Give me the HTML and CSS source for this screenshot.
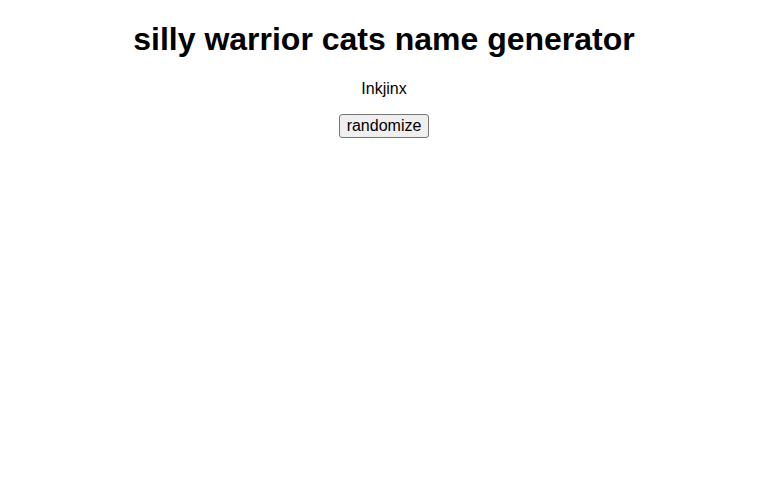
FILE: index.html
```html
<!DOCTYPE html>
<html>
<head>
<meta charset="utf-8">
<link rel="stylesheet" href="styles.css">
</head>
<body class="page">
<h1 class="title">silly warrior cats name generator</h1>
<p class="name">Inkjinx</p>
<button class="btn">randomize</button>
</body>
</html>
```
FILE: styles.css
```css
.page {
  margin: 0;
  font-family: "Liberation Sans", Arial, sans-serif;
  text-align: center;
  color: #000;
  background: #fff;
}
.title {
  font-size: 32px;
  font-weight: bold;
  margin: 21.44px 0;
}
.name {
  font-size: 16px;
  margin: 16px 0;
}
.btn {
  font-family: "Liberation Sans", Arial, sans-serif;
  font-size: 16px;
  background: #efefef;
  border: 1px solid #767676;
  border-radius: 3px;
  padding: 2px 7px;
  color: #000;
}
```
